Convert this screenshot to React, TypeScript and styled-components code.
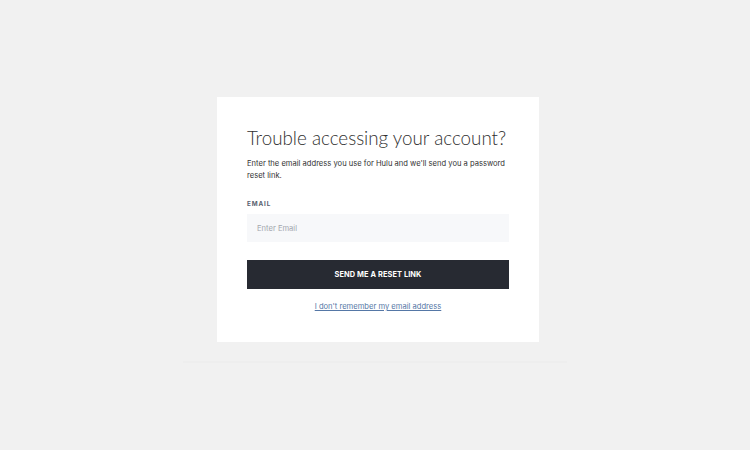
import styled, { createGlobalStyle } from "styled-components";

const Global = createGlobalStyle`
  html, body {
    margin: 0;
    padding: 0;
    background: #f1f1f1;
    font-family: "Inter", "Liberation Sans", sans-serif;
  }
`;

const Page = styled.div`
  width: 750px;
  height: 450px;
  display: flex;
  flex-direction: column;
  align-items: center;
  padding-top: 97px;
  box-sizing: border-box;
`;

const Card = styled.div`
  width: 322px;
  height: 245px;
  margin-left: 6px;
  background: #ffffff;
  box-sizing: border-box;
  padding: 30px 30px 0 30px;
  display: flex;
  flex-direction: column;
`;

const Divider = styled.div`
  margin-top: 19px;
  width: 384px;
  height: 2px;
  background: #eeeeee;
`;

const Title = styled.h1`
  margin: 0;
  font-family: "Lato", "Liberation Sans", sans-serif;
  font-size: 18.8px;
  font-weight: 300;
  color: #303030;
  line-height: 22px;
  white-space: nowrap;
`;

const Lead = styled.p`
  margin: 9px 0 0 0;
  font-size: 7.6px;
  line-height: 12px;
  color: #333333;
`;

const Label = styled.label`
  margin-top: 18px;
  font-size: 6.3px;
  font-weight: 700;
  letter-spacing: 0.9px;
  color: #58606e;
  line-height: 8px;
`;

const Input = styled.input`
  margin-top: 6px;
  height: 28px;
  border: none;
  background: #f7f8fa;
  padding: 0 10px;
  font-family: inherit;
  font-size: 7.6px;
  color: #2b2b2b;
  outline: none;
  &::placeholder {
    color: #a3a7ae;
  }
`;

const Button = styled.button`
  margin-top: 18px;
  height: 29px;
  border: none;
  background: #272a32;
  color: #ffffff;
  font-family: inherit;
  font-size: 7.4px;
  font-weight: 700;
  letter-spacing: 0.1px;
  cursor: pointer;
`;

const Link = styled.a`
  margin-top: 13px;
  align-self: center;
  font-size: 7.6px;
  color: #5577a6;
  text-decoration: underline;
  cursor: pointer;
`;

export default function App() {
  return (
    <>
      <Global />
      <Page>
        <Card>
          <Title>Trouble accessing your account?</Title>
          <Lead>
            Enter the email address you use for Hulu and we'll send you a password reset link.
          </Lead>
          <Label>EMAIL</Label>
          <Input placeholder="Enter Email" />
          <Button>SEND ME A RESET LINK</Button>
          <Link>I don't remember my email address</Link>
        </Card>
        <Divider />
      </Page>
    </>
  );
}
